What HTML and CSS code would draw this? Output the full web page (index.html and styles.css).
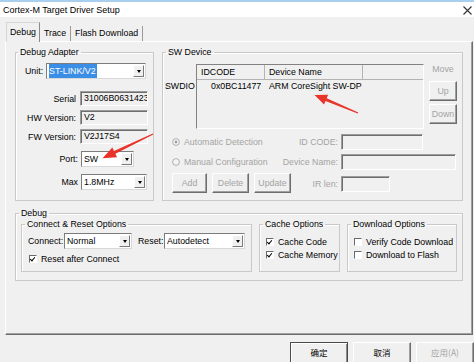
FILE: index.html
```html
<!DOCTYPE html>
<html lang="en">
<head>
  <meta charset="UTF-8">
  <meta name="viewport" content="width=device-width, initial-scale=1.0">
  <title>Cortex-M Target Driver Setup</title>
  <link rel="stylesheet" href="styles.css">
</head>
<body>
<div class="titlebar">
  <span class="title">Cortex-M Target Driver Setup</span>
  <svg class="close" width="9" height="9" viewBox="0 0 9 9"><path d="M0.5 0.5L8.5 8.5M8.5 0.5L0.5 8.5" stroke="#333" stroke-width="1.1"/></svg>
</div>

<div class="tabs">
  <div class="tab active">Debug</div>
  <div class="tab">Trace</div>
  <div class="tab">Flash Download</div>
</div>

<div class="panel">
  <div class="top-row">
    <fieldset class="group adapter">
      <legend>Debug Adapter</legend>
      <div class="unit-row">
        <span class="unit-label">Unit:</span>
        <div class="select unit-select"><span class="sel-text"><span class="picked">ST-LINK/V2</span></span><span class="drop"><i></i></span></div>
      </div>
      <div class="field-row serial-row"><span class="lbl">Serial</span><div class="box info-box">31006B063142325</div></div>
      <div class="field-row"><span class="lbl">HW Version:</span><div class="box info-box">V2</div></div>
      <div class="field-row"><span class="lbl">FW Version:</span><div class="box info-box">V2J17S4</div></div>
      <div class="field-row port-row"><span class="lbl wide">Port:</span><div class="select port-select"><span class="sel-text">SW</span><span class="drop"><i></i></span></div></div>
      <div class="field-row port-row"><span class="lbl wide">Max</span><div class="select max-select"><span class="sel-text">1.8MHz</span><span class="drop"><i></i></span></div></div>
    </fieldset>

    <fieldset class="group device">
      <legend>SW Device</legend>
      <div class="device-top">
        <span class="swdio">SWDIO</span>
        <div class="list">
          <div class="list-head">
            <span class="col c1">IDCODE</span>
            <span class="col c2">Device Name</span>
            <span class="col c3"></span>
          </div>
          <div class="list-row">
            <span class="c1 idcode">0x0BC11477</span>
            <span class="c2 devname">ARM CoreSight SW-DP</span>
          </div>
        </div>
        <div class="move">
          <span class="move-label">Move</span>
          <div class="btn off move-btn up">Up</div>
          <div class="btn off move-btn down">Down</div>
        </div>
      </div>
      <div class="device-grid">
        <div class="radio-row">
          <svg width="8" height="8" viewBox="0 0 8 8"><circle cx="4" cy="4" r="3.4" fill="#f4f4f4" stroke="#a8a8a8" stroke-width="0.9"/><circle cx="4" cy="4" r="1.4" fill="#a0a0a0"/></svg>
          <span>Automatic Detection</span>
        </div>
        <span class="glbl">ID CODE:</span>
        <div class="box off-box w-id"></div>

        <div class="radio-row">
          <svg width="8" height="8" viewBox="0 0 8 8"><circle cx="4" cy="4" r="3.4" fill="#f4f4f4" stroke="#a8a8a8" stroke-width="0.9"/></svg>
          <span>Manual Configuration</span>
        </div>
        <span class="glbl">Device Name:</span>
        <div class="box off-box w-name"></div>

        <div class="btn-row">
          <div class="btn off b-add">Add</div>
          <div class="btn off b-del">Delete</div>
          <div class="btn off b-upd">Update</div>
        </div>
        <span class="glbl">IR len:</span>
        <div class="box off-box w-ir"></div>
      </div>
    </fieldset>
  </div>

  <fieldset class="group debug-group">
    <legend>Debug</legend>
    <div class="debug-row">
      <fieldset class="group connect">
        <legend>Connect &amp; Reset Options</legend>
        <div class="connect-row">
          <span class="c-lbl">Connect:</span>
          <div class="select connect-select"><span class="sel-text">Normal</span><span class="drop"><i></i></span></div>
          <span class="r-lbl">Reset:</span>
          <div class="select reset-select"><span class="sel-text">Autodetect</span><span class="drop"><i></i></span></div>
        </div>
        <div class="check-row first"><span class="check on"></span><span>Reset after Connect</span></div>
      </fieldset>

      <fieldset class="group cache">
        <legend>Cache Options</legend>
        <div class="check-row"><span class="check on"></span><span>Cache Code</span></div>
        <div class="check-row"><span class="check on"></span><span>Cache Memory</span></div>
      </fieldset>

      <fieldset class="group download">
        <legend>Download Options</legend>
        <div class="check-row"><span class="check"></span><span>Verify Code Download</span></div>
        <div class="check-row"><span class="check"></span><span>Download to Flash</span></div>
      </fieldset>
    </div>
  </fieldset>
</div>

<div class="footer">
  <div class="fbtn default">确定</div>
  <div class="fbtn">取消</div>
  <div class="fbtn off">应用(A)</div>
</div>

<!-- red annotation arrows drawn over the dialog -->
<svg class="arrows" width="474" height="362" viewBox="0 0 474 362">
  <polygon fill="#e8342a" points="152.8,133.4 114.0,151.0 112.3,147.6 102.5,158.3 117.1,157.2 115.4,153.8 153.3,134.6"/>
  <polygon fill="#e8342a" points="358.3,112.4 326.7,98.2 328.1,94.7 314.6,94.9 324.0,104.5 325.5,101.0 357.7,113.6"/>
</svg>
</body>
</html>
```

FILE: styles.css
```css
body{
  margin: 0;
  width: 474px;
  height: 362px;
  overflow: hidden;
  position: relative;
  background: #f0f0f0;
  font-family: "Liberation Sans", Arial, sans-serif;
  font-size: 8.8px;
  color: #000;
}

.titlebar{
  display: flex;
  justify-content: space-between;
  align-items: center;
  height: 15px;
  border-top: 2px solid #a9cfee;
  background: #fff;
  padding: 0 2px 0 3px;
}

.title{
  font-size: 9px;
}

.close{
  margin-top: 1px;
}

.tabs{
  display: flex;
  align-items: flex-end;
  height: 24px;
  padding-left: 6px;
}

.tab{
  height: 15px;
  line-height: 15px;
  padding: 0 4px;
  border-right: 1px solid #9a9a9a;
}

.tab.active{
  position: relative;
  z-index: 1;
  height: 19px;
  line-height: 18px;
  margin-bottom: -1px;
  background: #f0f0f0;
  border-top: 1px solid #d6d6d6;
  border-left: 1px solid #d6d6d6;
  border-right: 1px solid #8a8a8a;
  padding: 0 3px 0 3px;
}

.panel{
  box-sizing: border-box;
  width: 468px;
  height: 294px;
  margin-left: 5px;
  padding: 5px 9px 0;
  border: 1px solid;
  border-color: #fff #6d6d6d #6d6d6d #fff;
  box-shadow: inset -1px -1px #a0a0a0;
}

/* group boxes */
.group{
  margin: 0;
  padding: 0;
  min-width: 0;
  box-sizing: border-box;
  border: 1px solid #c9c9c9;
  box-shadow: inset 1px 1px #fff;
}

.group legend{
  margin-left: 3px;
  padding: 0 2px;
  line-height: 11px;
  height: 11px;
  white-space: nowrap;
}

.adapter legend{
  margin-left: 2px;
}

.top-row{
  display: flex;
  gap: 8px;
  height: 154px;
}

.adapter{
  width: 139px;
}

.device{
  width: 301px;
}

/* inputs and drop-downs */
.select{
  box-sizing: border-box;
  display: flex;
  height: 16px;
  background: #fff;
  border: 1px solid;
  border-color: #7c7c7c #d8d8d8 #d8d8d8 #7c7c7c;
}

.sel-text{
  flex: 1;
  line-height: 14px;
  padding-left: 2px;
  overflow: hidden;
  white-space: nowrap;
}

.picked{
  display: inline-block;
  background: #3b8ee6;
  color: #fff;
  padding-right: 1px;
}

.drop{
  box-sizing: border-box;
  width: 11px;
  margin: 1px;
  display: flex;
  align-items: center;
  justify-content: center;
  background: #f0f0f0;
  border: 1px solid;
  border-color: #fff #7a7a7a #7a7a7a #fff;
}

.drop i{
  width: 0;
  height: 0;
  border-left: 2.5px solid transparent;
  border-right: 2.5px solid transparent;
  border-top: 3px solid #000;
}

.box{
  box-sizing: border-box;
  height: 15px;
  line-height: 13px;
  padding-left: 3px;
  border: 1px solid;
  border-color: #9c9c9c #fff #fff #9c9c9c;
  box-shadow: inset 1px 1px #6e6e6e;
  background: #f0f0f0;
  overflow: hidden;
  white-space: nowrap;
}

.btn{
  box-sizing: border-box;
  height: 20px;
  line-height: 18px;
  text-align: center;
  background: #f0f0f0;
  border: 1px solid;
  border-color: #fff #6e6e6e #6e6e6e #fff;
  box-shadow: inset -1px -1px #a0a0a0;
}

.off{
  color: #a4a4a4;
}

/* debug adapter */
.unit-row{
  display: flex;
  align-items: center;
  margin-top: 5px;
  padding-left: 9px;
}

.unit-label{
  margin-right: 3px;
}

.unit-select{
  width: 100px;
}

.field-row{
  display: flex;
  align-items: center;
  margin-top: 4px;
}

.serial-row{
  margin-top: 12px;
}

.port-row{
  margin-top: 7px;
}

.lbl{
  width: 60px;
  margin-right: 4px;
  text-align: right;
  white-space: nowrap;
}

.lbl.wide{
  width: 62px;
  margin-right: 3px;
}

.info-box{
  width: 68px;
}

.port-select{
  width: 53px;
}

.max-select{
  width: 66px;
}

/* sw device */
.device-top{
  display: flex;
  align-items: flex-start;
  margin-top: 6px;
  padding-left: 2px;
}

.swdio{
  width: 31px;
  margin-top: 17px;
  line-height: 11px;
}

.list{
  box-sizing: border-box;
  width: 228px;
  height: 65px;
  border: 1px solid;
  border-color: #828282 #fff #fff #828282;
}

.list-head{
  display: flex;
  height: 14px;
  line-height: 14px;
  border-bottom: 1px solid #b4b4b4;
}

.col{
  box-sizing: border-box;
  border-right: 1px solid #b4b4b4;
  padding-left: 4px;
}

.c1{
  width: 68px;
}

.c2{
  width: 98px;
}

.c3{
  flex: 1;
  border-right: none;
}

.list-row{
  display: flex;
  line-height: 11px;
  margin-top: 1px;
}

.idcode{
  box-sizing: border-box;
  padding-left: 14px;
}

.devname{
  padding-left: 4px;
  white-space: nowrap;
}

.move{
  display: flex;
  flex-direction: column;
  width: 28px;
  margin-left: 5px;
  color: #a4a4a4;
}

.move-label{
  line-height: 11px;
  text-align: center;
}

.move-btn.up{
  margin-top: 6px;
}

.move-btn.down{
  margin-top: 3px;
}

.device-grid{
  display: grid;
  grid-template-columns: 120px 47px auto;
  grid-template-rows: 16px 16px 20px;
  row-gap: 4px;
  align-items: center;
  margin-top: 5px;
  padding-left: 8px;
}

.radio-row{
  display: flex;
  align-items: center;
  gap: 4px;
  padding-left: 1px;
  color: #a4a4a4;
  white-space: nowrap;
}

.glbl{
  display: flex;
  justify-content: flex-end;
  white-space: nowrap;
  color: #a4a4a4;
}

.off-box{
  height: 16px;
  margin-left: 3px;
}

.w-id{
  width: 82px;
}

.w-name{
  width: 115px;
}

.w-ir{
  width: 49px;
}

.btn-row{
  display: flex;
  gap: 5px;
  padding-left: 1px;
  align-self: start;
  margin-top: -1px;
}

.b-add{
  width: 36px;
}

.b-del,
.b-upd{
  width: 38px;
}

/* debug group */
.debug-group{
  width: 448px;
  height: 73px;
  margin-top: 7px;
}

.debug-row{
  display: flex;
  gap: 7px;
  padding-left: 5px;
}

.connect{
  width: 231px;
  height: 53px;
}

.cache{
  width: 81px;
  height: 53px;
  padding-top: 5px;
}

.download{
  width: 110px;
  height: 53px;
  padding: 5px 3px 0 0;
}

.connect-row{
  display: flex;
  align-items: center;
  margin-top: 3px;
  padding-left: 6px;
}

.c-lbl{
  width: 36px;
}

.connect-select{
  width: 68px;
}

.r-lbl{
  width: 26px;
  margin-left: 6px;
}

.reset-select{
  width: 81px;
}

.check-row{
  display: flex;
  align-items: center;
  gap: 4px;
  height: 13px;
  padding-left: 6px;
  white-space: nowrap;
  overflow: hidden;
}

.check-row.first{
  margin-top: 3px;
  padding-left: 7px;
}

.check{
  flex: none;
  box-sizing: border-box;
  width: 8px;
  height: 8px;
  border: 1px solid;
  border-color: #6a6a6a #fff #fff #6a6a6a;
  background: #fff;
  position: relative;
}

.check.on::after{
  content: "";
  position: absolute;
  left: 1px;
  top: 0px;
  width: 2px;
  height: 4px;
  border-right: 1.4px solid #000;
  border-bottom: 1.4px solid #000;
  transform: rotate(40deg);
}

/* dialog buttons */
.footer{
  display: flex;
  justify-content: flex-end;
  gap: 5px;
  margin-top: 7px;
}

.fbtn{
  box-sizing: border-box;
  width: 58px;
  height: 22px;
  line-height: 19px;
  text-align: center;
  font-family: "Noto Sans CJK SC", sans-serif;
  font-size: 8.5px;
  background: #f0f0f0;
  border: 1px solid;
  border-color: #fff #6e6e6e #6e6e6e #fff;
  box-shadow: inset -1px -1px #a0a0a0;
}

.fbtn.default{
  border: 1px solid #4a4a4a;
  box-shadow: inset 1px 1px #fff, inset -1px -1px #8a8a8a;
}

.arrows{
  position: absolute;
  top: 0;
  left: 0;
  pointer-events: none;
}
```
